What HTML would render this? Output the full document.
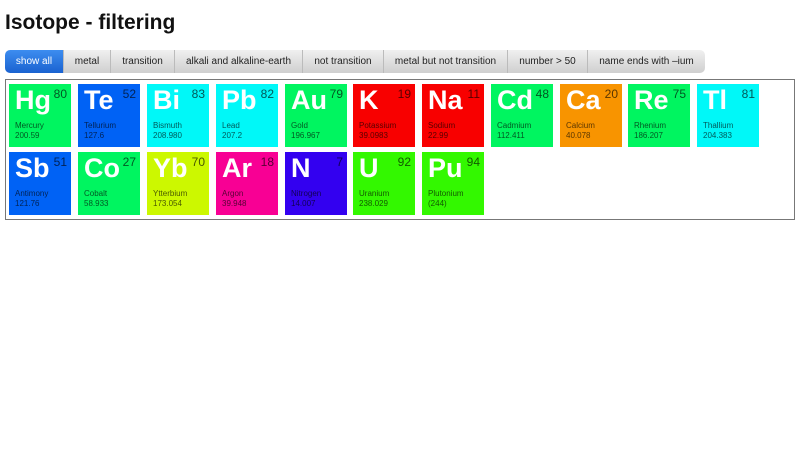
<!DOCTYPE html><html><head><style>
body{margin:0;background:#fff;font-family:"Liberation Sans",sans-serif;}
h1{position:absolute;left:5px;top:11px;margin:0;font-size:21px;font-weight:bold;color:#111;}
.bar{position:absolute;left:5px;top:50px;height:23px;display:flex;}
.bar div{height:23px;line-height:23px;font-size:10px;color:#222;text-align:center;background:linear-gradient(#f0f0f0,#cfcfcf);border-right:1px solid #bbb;box-sizing:border-box;}
.bar div.on{background:linear-gradient(#3d8df0,#1a62d0);color:#fff;border-radius:5px 0 0 5px;}
.bar div.last{border-radius:0 5px 5px 0;border-right:none}
.box{position:absolute;left:5px;top:79px;width:790px;height:141px;box-sizing:border-box;border:1px solid #777;}
.t{position:absolute;width:62px;height:63px;}
.t b{position:absolute;left:6px;top:1px;font-size:27px;line-height:30px;color:#fff;}
.t i{position:absolute;right:4px;top:3px;font-style:normal;font-size:12px;color:rgba(0,0,0,.65);}
.t span{position:absolute;left:6px;top:37px;font-size:8px;line-height:10px;color:rgba(0,0,0,.65);}
</style></head><body>
<h1>Isotope - filtering</h1>
<div class="bar">
<div class="on" style="width:59px">show all</div>
<div style="width:47px">metal</div>
<div style="width:64px">transition</div>
<div style="width:128px">alkali and alkaline-earth</div>
<div style="width:81px">not transition</div>
<div style="width:124px">metal but not transition</div>
<div style="width:80px">number &gt; 50</div>
<div class="last" style="width:117px">name ends with –ium</div>
</div>
<div class="box"></div>
<div class="t" style="left:9px;top:84px;background:#00f560"><b>Hg</b><i>80</i><span>Mercury<br>200.59</span></div>
<div class="t" style="left:78px;top:84px;background:#0062f5"><b>Te</b><i>52</i><span>Tellurium<br>127.6</span></div>
<div class="t" style="left:147px;top:84px;background:#00f8f8"><b>Bi</b><i>83</i><span>Bismuth<br>208.980</span></div>
<div class="t" style="left:216px;top:84px;background:#00f8f8"><b>Pb</b><i>82</i><span>Lead<br>207.2</span></div>
<div class="t" style="left:285px;top:84px;background:#00f560"><b>Au</b><i>79</i><span>Gold<br>196.967</span></div>
<div class="t" style="left:353px;top:84px;background:#f80000"><b>K</b><i>19</i><span>Potassium<br>39.0983</span></div>
<div class="t" style="left:422px;top:84px;background:#f80000"><b>Na</b><i>11</i><span>Sodium<br>22.99</span></div>
<div class="t" style="left:491px;top:84px;background:#00f560"><b>Cd</b><i>48</i><span>Cadmium<br>112.411</span></div>
<div class="t" style="left:560px;top:84px;background:#f89400"><b>Ca</b><i>20</i><span>Calcium<br>40.078</span></div>
<div class="t" style="left:628px;top:84px;background:#00f560"><b>Re</b><i>75</i><span>Rhenium<br>186.207</span></div>
<div class="t" style="left:697px;top:84px;background:#00f8f8"><b>Tl</b><i>81</i><span>Thallium<br>204.383</span></div>
<div class="t" style="left:9px;top:152px;background:#0062f5"><b>Sb</b><i>51</i><span>Antimony<br>121.76</span></div>
<div class="t" style="left:78px;top:152px;background:#00f560"><b>Co</b><i>27</i><span>Cobalt<br>58.933</span></div>
<div class="t" style="left:147px;top:152px;background:#ccf800"><b>Yb</b><i>70</i><span>Ytterbium<br>173.054</span></div>
<div class="t" style="left:216px;top:152px;background:#f80094"><b>Ar</b><i>18</i><span>Argon<br>39.948</span></div>
<div class="t" style="left:285px;top:152px;background:#3300f0"><b>N</b><i>7</i><span>Nitrogen<br>14.007</span></div>
<div class="t" style="left:353px;top:152px;background:#33f800"><b>U</b><i>92</i><span>Uranium<br>238.029</span></div>
<div class="t" style="left:422px;top:152px;background:#33f800"><b>Pu</b><i>94</i><span>Plutonium<br>(244)</span></div>
</body></html>
